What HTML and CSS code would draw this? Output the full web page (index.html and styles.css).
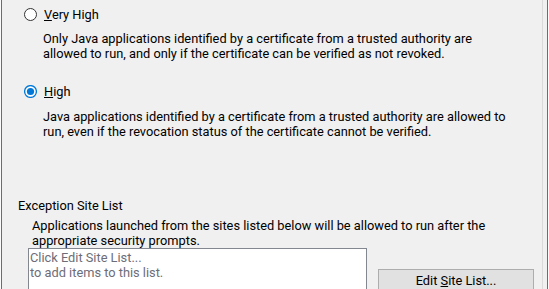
FILE: index.html
```html
<!DOCTYPE html>
<html>
<head>
<meta charset="utf-8">
<link rel="stylesheet" href="styles.css">
</head>
<body>
<div class="window">
  <div class="panel">
    <div class="levels">
      <div class="option opt-first">
        <svg class="radio" width="13" height="13" viewBox="0 0 13 13"><circle cx="6.5" cy="6.5" r="6" fill="#fff" stroke="#333" stroke-width="1"/></svg>
        <span class="label"><u>V</u>ery High</span>
      </div>
      <p class="desc desc-first">Only Java applications identified by a certificate from a trusted authority are<br>allowed to run, and only if the certificate can be verified as not revoked.</p>
      <div class="option opt-second">
        <svg class="radio" width="13" height="13" viewBox="0 0 13 13"><circle cx="6.5" cy="6.5" r="5.9" fill="#fff" stroke="#0078d7" stroke-width="1.3"/><circle cx="6.5" cy="6.5" r="3.6" fill="#0078d7"/></svg>
        <span class="label"><u>H</u>igh</span>
      </div>
      <p class="desc desc-second">Java applications identified by a certificate from a trusted authority are allowed to<br>run, even if the revocation status of the certificate cannot be verified.</p>
    </div>
    <div class="exception">
      <div class="ex-title">Exception Site List</div>
      <p class="ex-text">Applications launched from the sites listed below will be allowed to run after the<br>appropriate security prompts.</p>
      <div class="ex-row">
        <div class="sitebox">
          <div class="hint">Click Edit Site List...</div>
          <div class="hint">to add items to this list.</div>
        </div>
        <button class="edit-btn">Edit <u>S</u>ite List...</button>
      </div>
    </div>
  </div>
</div>
</body>
</html>
```

FILE: styles.css
```css
html, body {
  margin: 0;
  padding: 0;
  background: #fbfbfb;
}
body {
  width: 549px;
  height: 289px;
  overflow: hidden;
  font-family: Roboto, "Liberation Sans", sans-serif;
  font-size: 12.8px;
  line-height: 15px;
  color: #000;
}
.window {
  margin-left: 1px;
  width: 545px;
  height: 289px;
  border-left: 1px solid #1883d7;
  border-right: 1px solid #1883d7;
  background: #f0f0f0;
  display: flex;
}
.panel {
  width: 541px;
  height: 289px;
  border-right: 1px solid #dadada;
  padding-left: 16px;
  box-sizing: border-box;
  overflow: hidden;
}
.levels {
  padding-left: 6px;
}
.option {
  display: flex;
  align-items: center;
  gap: 7px;
  height: 15px;
}
.radio {
  display: block;
  flex: none;
}
.opt-first { margin-top: 7px; }
.opt-second { margin-top: 23px; }
.desc {
  margin: 0 0 0 19px;
  white-space: nowrap;
}
.desc-first { margin-top: 9px; }
.desc-second { margin-top: 10px; }
.exception {
  margin-top: 59px;
}
.ex-title {
  height: 15px;
}
.ex-text {
  margin: 5px 0 0 14px;
  white-space: nowrap;
}
.ex-row {
  display: flex;
  align-items: flex-start;
  gap: 11px;
  margin-left: 10px;
}
.sitebox {
  width: 339px;
  height: 60px;
  box-sizing: border-box;
  border: 1px solid #828790;
  background: #fff;
  padding: 1px 0 0 1px;
  flex: none;
}
.hint {
  color: #6d6d78;
  white-space: nowrap;
}
.edit-btn {
  margin-top: 21px;
  width: 156px;
  height: 23px;
  box-sizing: border-box;
  border: 1px solid #adadad;
  background: #e1e1e1;
  font: inherit;
  color: #000;
  padding: 0;
  flex: none;
}
```
